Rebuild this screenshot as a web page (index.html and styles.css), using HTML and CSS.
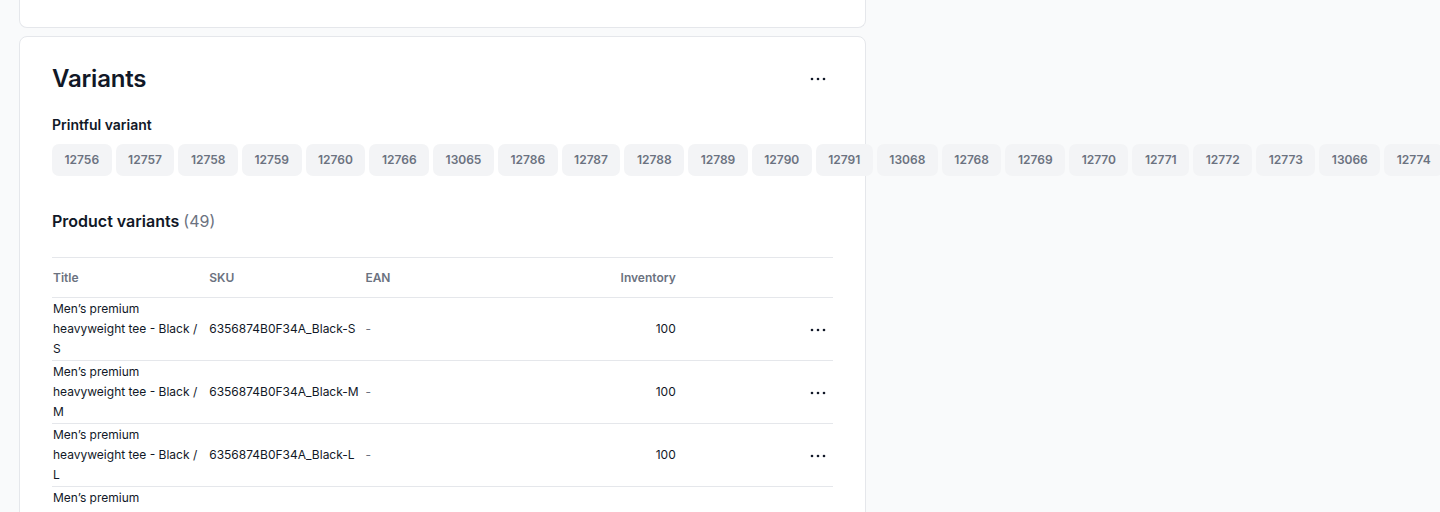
FILE: index.html
```html
<!DOCTYPE html>
<html lang="en">
<head>
<meta charset="utf-8">
<title>Variants</title>
<link rel="stylesheet" href="styles.css">
</head>
<body>
<main class="main">
  <section class="card card-prev"></section>
  <section class="card card-variants">
    <header class="card-head">
      <h2 class="card-title">Variants</h2>
      <button class="icon-btn" aria-label="More">
        <svg width="18" height="18" viewBox="0 0 18 18"><circle cx="3" cy="9" r="1.3"/><circle cx="9" cy="9" r="1.3"/><circle cx="15" cy="9" r="1.3"/></svg>
      </button>
    </header>

    <h3 class="label">Printful variant</h3>
    <div class="chips">
      <span class="chip">12756</span><span class="chip">12757</span><span class="chip">12758</span><span class="chip">12759</span><span class="chip">12760</span><span class="chip">12766</span><span class="chip">13065</span><span class="chip">12786</span><span class="chip">12787</span><span class="chip">12788</span><span class="chip">12789</span><span class="chip">12790</span><span class="chip">12791</span><span class="chip">13068</span><span class="chip">12768</span><span class="chip">12769</span><span class="chip">12770</span><span class="chip">12771</span><span class="chip">12772</span><span class="chip">12773</span><span class="chip">13066</span><span class="chip">12774</span>
    </div>

    <h3 class="subhead">Product variants <span class="count">(49)</span></h3>

    <table class="table">
      <colgroup><col><col><col><col><col></colgroup>
      <thead>
        <tr><th class="c-title">Title</th><th class="c-sku">SKU</th><th class="c-ean">EAN</th><th class="num">Inventory</th><th></th></tr>
      </thead>
      <tbody>
        <tr>
          <td class="c-title">Men’s premium heavyweight tee - Black / S</td>
          <td class="c-sku">6356874B0F34A_Black-S</td>
          <td class="c-ean muted">-</td>
          <td class="num">100</td>
          <td class="act"><svg width="18" height="18" viewBox="0 0 18 18"><circle cx="3" cy="9" r="1.3"/><circle cx="9" cy="9" r="1.3"/><circle cx="15" cy="9" r="1.3"/></svg></td>
        </tr>
        <tr>
          <td class="c-title">Men’s premium heavyweight tee - Black / M</td>
          <td class="c-sku">6356874B0F34A_Black-M</td>
          <td class="c-ean muted">-</td>
          <td class="num">100</td>
          <td class="act"><svg width="18" height="18" viewBox="0 0 18 18"><circle cx="3" cy="9" r="1.3"/><circle cx="9" cy="9" r="1.3"/><circle cx="15" cy="9" r="1.3"/></svg></td>
        </tr>
        <tr>
          <td class="c-title">Men’s premium heavyweight tee - Black / L</td>
          <td class="c-sku">6356874B0F34A_Black-L</td>
          <td class="c-ean muted">-</td>
          <td class="num">100</td>
          <td class="act"><svg width="18" height="18" viewBox="0 0 18 18"><circle cx="3" cy="9" r="1.3"/><circle cx="9" cy="9" r="1.3"/><circle cx="15" cy="9" r="1.3"/></svg></td>
        </tr>
        <tr>
          <td class="c-title">Men’s premium heavyweight tee - Black / XL</td>
          <td class="c-sku">6356874B0F34A_Black-XL</td>
          <td class="c-ean muted">-</td>
          <td class="num">100</td>
          <td class="act"><svg width="18" height="18" viewBox="0 0 18 18"><circle cx="3" cy="9" r="1.3"/><circle cx="9" cy="9" r="1.3"/><circle cx="15" cy="9" r="1.3"/></svg></td>
        </tr>
      </tbody>
    </table>
  </section>
</main>
</body>
</html>
```

FILE: styles.css
```css
* { box-sizing: border-box; }
html, body { margin: 0; padding: 0; }
body {
  background: #f9fafb;
  font-family: Inter, "Noto Sans", sans-serif;
  color: #111827;
  height: 512px;
  overflow: hidden;
}
.main {
  padding: 0 0 0 19px;
  display: flex;
  flex-direction: column;
  gap: 8px;
}
.card {
  width: 847px;
  background: #fff;
  border: 1px solid #e5e7eb;
  border-radius: 8px;
}
.card-prev {
  height: 28px;
  border-top: none;
  border-radius: 0 0 8px 8px;
}
.card-variants {
  padding: 26px 32px 32px;
}
.card-head {
  display: flex;
  align-items: center;
  justify-content: space-between;
}
.card-title {
  margin: 0;
  font-size: 24px;
  line-height: 32px;
  font-weight: 600;
  letter-spacing: -0.2px;
}
.icon-btn {
  width: 32px;
  height: 32px;
  margin-right: -1px;
  padding: 0;
  border: none;
  background: transparent;
  display: flex;
  align-items: center;
  justify-content: center;
  fill: #111827;
}
.label {
  margin: 20px 0 0;
  font-size: 14px;
  line-height: 20px;
  font-weight: 600;
}
.chips {
  margin-top: 9px;
  display: flex;
  gap: 4px;
  white-space: nowrap;
}
.chip {
  flex: none;
  height: 32px;
  padding: 0 12.5px;
  border-radius: 7px;
  background: #f3f4f6;
  color: #6b7280;
  font-size: 12px;
  font-weight: 600;
  line-height: 32px;
}
.subhead {
  margin: 33px 0 0;
  font-size: 16px;
  line-height: 24px;
  font-weight: 600;
}
.count {
  font-weight: 400;
  color: #6b7280;
}
.table {
  margin-top: 24px;
  width: 100%;
  table-layout: fixed;
  border-collapse: collapse;
  font-size: 12px;
  line-height: 20px;
}
.table thead tr { border-top: 1px solid #e5e7eb; }
.table tr { border-bottom: 1px solid #e5e7eb; }
.table th {
  height: 40px;
  padding: 0;
  text-align: left;
  font-weight: 600;
  color: #6b7280;
}
.table td {
  padding: 1px 0;
  vertical-align: middle;
  color: #111827;
}
.table .c-title { padding-left: 1px; padding-right: 8px; }
.table .c-sku { padding-left: 1px; }
.table .c-ean { padding-left: 1px; }
.table .num { text-align: right; padding-right: 1px; }
.table td.muted { color: #6b7280; }
.table td.act {
  text-align: right;
  padding-right: 6px;
  fill: #111827;
}
.table td.act svg { display: inline-block; vertical-align: middle; }
```
